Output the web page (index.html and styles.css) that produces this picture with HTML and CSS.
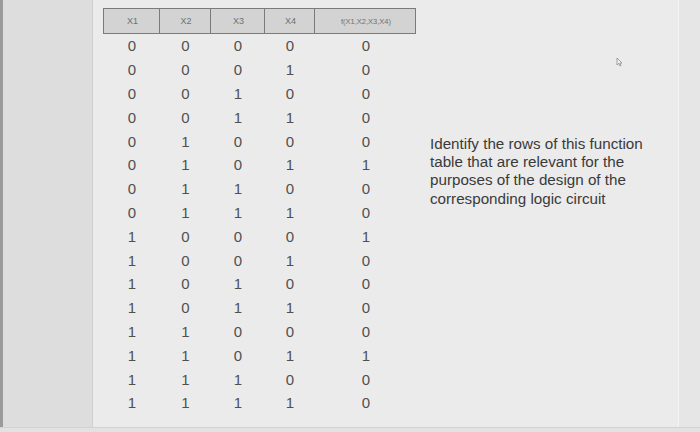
FILE: index.html
```html
<!DOCTYPE html>
<html>
<head>
<meta charset="utf-8">
<link rel="stylesheet" href="styles.css">
</head>
<body>
<div class="screen">
  <div class="side"></div>
  <div class="main">
    <div class="table">
      <div class="hd">X1</div><div class="hd">X2</div><div class="hd">X3</div><div class="hd">X4</div><div class="hd fn">f(X1,X2,X3,X4)</div>
      <div>0</div><div>0</div><div>0</div><div>0</div><div>0</div>
      <div>0</div><div>0</div><div>0</div><div>1</div><div>0</div>
      <div>0</div><div>0</div><div>1</div><div>0</div><div>0</div>
      <div>0</div><div>0</div><div>1</div><div>1</div><div>0</div>
      <div>0</div><div>1</div><div>0</div><div>0</div><div>0</div>
      <div>0</div><div>1</div><div>0</div><div>1</div><div>1</div>
      <div>0</div><div>1</div><div>1</div><div>0</div><div>0</div>
      <div>0</div><div>1</div><div>1</div><div>1</div><div>0</div>
      <div>1</div><div>0</div><div>0</div><div>0</div><div>1</div>
      <div>1</div><div>0</div><div>0</div><div>1</div><div>0</div>
      <div>1</div><div>0</div><div>1</div><div>0</div><div>0</div>
      <div>1</div><div>0</div><div>1</div><div>1</div><div>0</div>
      <div>1</div><div>1</div><div>0</div><div>0</div><div>0</div>
      <div>1</div><div>1</div><div>0</div><div>1</div><div>1</div>
      <div>1</div><div>1</div><div>1</div><div>0</div><div>0</div>
      <div>1</div><div>1</div><div>1</div><div>1</div><div>0</div>
    </div>
    <p class="question">Identify the rows of this function table that are relevant for the purposes of the design of the corresponding logic circuit</p>
    <svg class="cursor" width="7" height="10" viewBox="0 0 7 10"><path d="M1 1 L1 8 L2.8 6.4 L4 9 L5 8.6 L3.9 6 L6 6 Z" fill="#f2f2f2" stroke="#8a8a8a" stroke-width="0.8"/></svg>
  </div>
  <div class="edge"></div>
</div>
</body>
</html>
```

FILE: styles.css
```css
html, body {
  margin: 0;
  padding: 0;
}
body {
  width: 700px;
  height: 432px;
  overflow: hidden;
  background: #e2e2e2;
  font-family: "Liberation Sans", Arial, sans-serif;
}
.screen {
  display: flex;
  height: 427px;
  border-bottom: 1px solid #d2d2d2;
}
.side {
  width: 89px;
  background: #dddddd;
  border-left: 3px solid #9a9a9a;
  border-right: 1px solid #cfcfcf;
}
.main {
  position: relative;
  flex: 1;
  display: flex;
  align-items: flex-start;
  background: #ebebeb;
  padding: 8px 0 0 10px;
}
.table {
  display: grid;
  grid-template-columns: 56px 51px 54px 50px 102px;
  grid-auto-rows: 23.8px;
  grid-template-rows: 26px;
  font-family: "Liberation Sans", Arial, sans-serif;
  font-size: 15px;
  color: #505050;
  text-align: center;
}
.table > div {
  display: flex;
  align-items: center;
  justify-content: center;
  padding-left: 2px;
}
.table .hd {
  background: #d3d3d3;
  border-top: 1px solid #7a7a7a;
  border-bottom: 1px solid #7a7a7a;
  border-left: 1px solid #7a7a7a;
  font-size: 9px;
  color: #707070;
}
.table .hd.fn {
  border-right: 1px solid #7a7a7a;
  font-size: 7.5px;
}
.question {
  margin: 127px 0 0 14px;
  width: 240px;
  font-size: 15.2px;
  line-height: 18.2px;
  color: #3a3a3a;
}
.cursor {
  position: absolute;
  left: 523px;
  top: 57px;
}
.edge {
  width: 21px;
  background: #e6e6e6;
  border-left: 1px solid #f4f4f4;
}
```
